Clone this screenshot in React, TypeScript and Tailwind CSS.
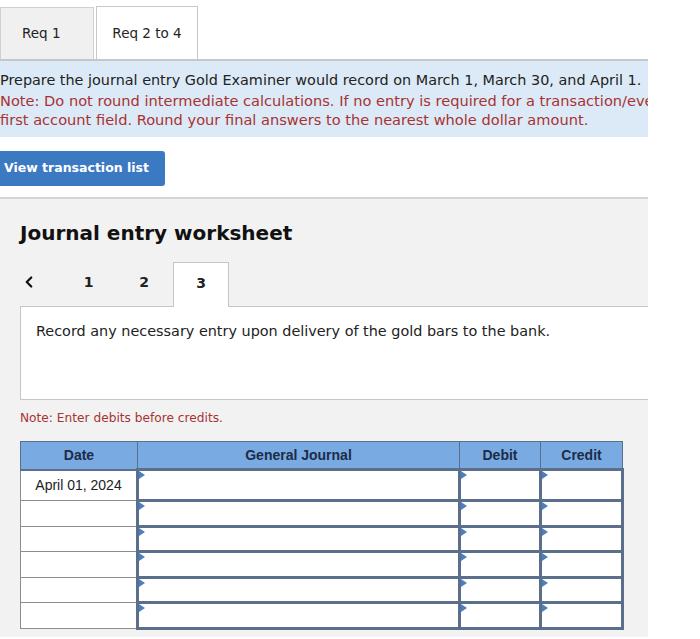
import { ChevronLeft } from 'lucide-react'

const ROWS = ['April 01, 2024', '', '', '', '', '']

function Marker() {
  return (
    <span className="absolute left-0 top-0 h-0 w-0 border-y-[4px] border-l-[6px] border-y-transparent border-l-[#4c7fc0]" />
  )
}

export default function App() {
  return (
    <div className="relative h-[639px] w-[700px] overflow-hidden bg-white font-['DejaVu_Sans',Verdana,sans-serif] text-[#222]">

      {/* tabs */}
      <div className="flex h-[59px] items-end">
        <div className="flex h-[52px] w-[94px] items-center border border-b-0 border-[#d0d0d0] bg-[#f0f0f0] pl-[21px] text-[13.5px]">
          Req 1
        </div>
        <div className="ml-[2px] flex h-[53px] w-[102px] items-center justify-center border border-b-0 border-[#c8c8c8] bg-white text-[13.5px]">
          Req 2 to 4
        </div>
      </div>

      {/* instructions */}
      <div className="h-[78px] w-[648px] overflow-hidden whitespace-nowrap border-t-2 border-[#c4c8cc] bg-[#dceaf7] pt-[10px] text-[14.6px] leading-[19.5px]">
        <div className="text-[14.4px]">Prepare the journal entry Gold Examiner would record on March 1, March 30, and April 1.</div>
        <div className="text-[#a83232]">Note: Do not round intermediate calculations. If no entry is required for a transaction/event, select "No journal entry required" in the</div>
        <div className="text-[#a83232]">first account field. Round your final answers to the nearest whole dollar amount.</div>
      </div>

      <div className="pt-[14px]">
        <button className="flex h-[35px] w-[165px] items-center rounded-r-[3px] bg-[#3b79c3] pl-[4px] text-[12.5px] font-bold text-white">
          View transaction list
        </button>
      </div>

      {/* worksheet */}
      <div className="mt-[11px] h-[440px] w-[648px] border-t-2 border-[#d4d4d4] bg-[#f2f2f2] pl-[20px]">
        <h2 className="pt-[20px] text-[20px] font-bold leading-[28px] text-[#111]">Journal entry worksheet</h2>

        <div className="mt-[15px] flex h-[44px] items-stretch">
          <div className="flex w-[30px] items-center pb-[4px]">
            <ChevronLeft className="size-[18px] text-[#111]" strokeWidth={3} />
          </div>
          <div className="flex w-[77px] items-center justify-center pb-[4px] text-[14px] font-semibold">1</div>
          <div className="flex w-[46px] items-center justify-center pr-[12px] pb-[4px] text-[14px] font-semibold">2</div>
          <div className="relative z-10 -mb-px flex w-[56px] items-center justify-center border border-b-0 border-[#c6c6c6] bg-white pb-[4px] text-[14px] font-semibold">3</div>
        </div>

        <div className="h-[94px] border border-r-0 border-[#c6c6c6] bg-white pl-[15px] pt-[14px] text-[14.4px]">
          Record any necessary entry upon delivery of the gold bars to the bank.
        </div>

        <p className="mt-[9px] text-[12.2px] text-[#a83232]">Note: Enter debits before credits.</p>

        <table className="mt-[14px] table-fixed border-collapse font-['Liberation_Sans',Arial,sans-serif] text-[14px]">
          <colgroup>
            <col className="w-[117px]" />
            <col className="w-[322px]" />
            <col className="w-[81px]" />
            <col className="w-[82px]" />
          </colgroup>
          <thead>
            <tr className="h-[28px] bg-[#79aae2] text-[#1d2c47]">
              <th className="border border-b-2 border-[#5b6f8c] font-bold">Date</th>
              <th className="border border-b-2 border-[#5b6f8c] font-bold">General Journal</th>
              <th className="border border-b-2 border-[#5b6f8c] font-bold">Debit</th>
              <th className="border border-b-2 border-[#5b6f8c] font-bold">Credit</th>
            </tr>
          </thead>
          <tbody>
            {ROWS.map((d, i) => (
              <tr key={i} className={i === 0 ? 'h-[31px]' : 'h-[25.5px]'}>
                <td className="border border-[#8c8c8c] bg-white text-center text-[#222]">{d}</td>
                {[0, 1, 2].map(c => (
                  <td key={c} className="relative border-[3px] border-[#5b6f8c] bg-white p-0">
                    <Marker />
                  </td>
                ))}
              </tr>
            ))}
          </tbody>
        </table>
      </div>
    </div>
  )
}
